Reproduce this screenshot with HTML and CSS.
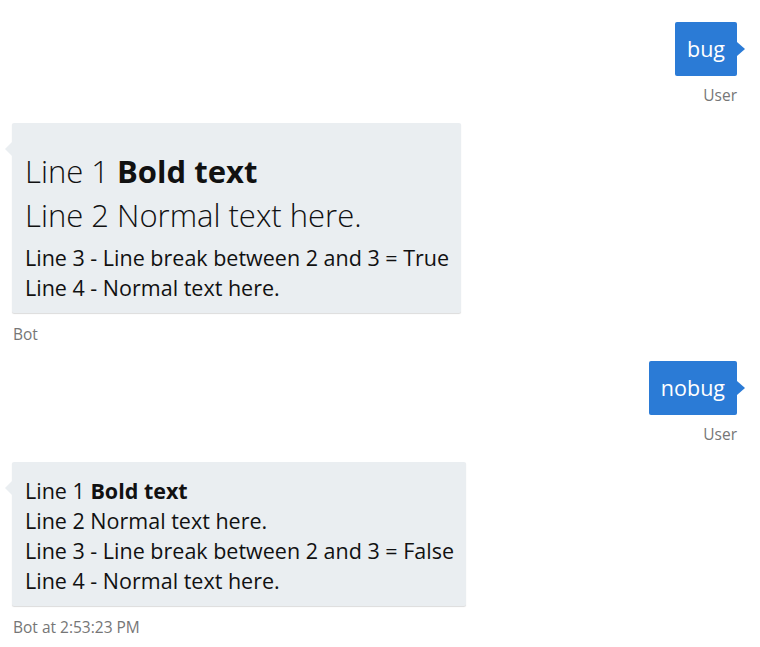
FILE: index.html
```html
<!DOCTYPE html>
<html>
<head>
<meta charset="utf-8">
<link rel="stylesheet" href="styles.css">
</head>
<body>
<div class="chat">
  <div class="msg user">
    <div class="bubble user-bubble">bug</div>
    <div class="meta">User</div>
  </div>
  <div class="msg bot">
    <div class="bubble bot-bubble">
      <div class="big first">Line 1 <b>Bold text</b></div>
      <div class="big last">Line 2 Normal text here.</div>
      <div class="line">Line 3 - Line break between 2 and 3 = True</div>
      <div class="line">Line 4 - Normal text here.</div>
    </div>
    <div class="meta">Bot</div>
  </div>
  <div class="msg user">
    <div class="bubble user-bubble">nobug</div>
    <div class="meta">User</div>
  </div>
  <div class="msg bot">
    <div class="bubble bot-bubble">
      <div class="line">Line 1 <b>Bold text</b></div>
      <div class="line">Line 2 Normal text here.</div>
      <div class="line">Line 3 - Line break between 2 and 3 = False</div>
      <div class="line">Line 4 - Normal text here.</div>
    </div>
    <div class="meta">Bot at 2:53:23 PM</div>
  </div>
</div>
</body>
</html>
```
FILE: styles.css
```css
html, body {
  margin: 0;
  padding: 0;
  background: #ffffff;
}
body {
  font-family: "Open Sans", "Noto Sans", sans-serif;
  color: #000;
}
.chat {
  display: flex;
  flex-direction: column;
  padding: 22px 23px 0 12px;
}
.msg {
  display: flex;
  flex-direction: column;
}
.msg.user {
  align-items: flex-end;
}
.msg.bot {
  align-items: flex-start;
}
.bubble {
  position: relative;
  border-radius: 2px;
  font-size: 21.5px;
  line-height: 30px;
}
.user-bubble {
  background: #2b7bd6;
  color: #fff;
  padding: 12px 12px;
}
.user-bubble::after {
  content: "";
  position: absolute;
  right: -8px;
  top: 20px;
  border-left: 8px solid #2b7bd6;
  border-top: 7px solid transparent;
  border-bottom: 7px solid transparent;
}
.bot-bubble {
  background: #eaeef1;
  color: #111;
  padding: 14px 12px 10px 13px;
  box-shadow: 0 1px 1px rgba(0,0,0,0.14);
}
.bot-bubble::before {
  content: "";
  position: absolute;
  left: -7px;
  top: 19px;
  border-right: 7px solid #eaeef1;
  border-top: 7px solid transparent;
  border-bottom: 7px solid transparent;
}
.big {
  font-size: 31px;
  font-weight: 300;
  line-height: 44px;
}
.big.first {
  margin-top: 12px;
}
.big.last {
  margin-bottom: 6px;
}
.big b {
  font-weight: 700;
}
.line b {
  font-weight: 700;
}
.meta {
  font-size: 15.5px;
  line-height: 20px;
  color: #767676;
}
.msg.bot .meta {
  margin: 11px 0 17px 1px;
}
.msg.user .meta {
  margin: 9px 0 18px 0;
}
```
